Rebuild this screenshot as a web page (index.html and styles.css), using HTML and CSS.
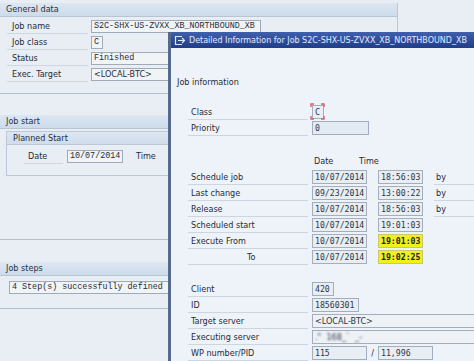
FILE: index.html
```html
<!DOCTYPE html>
<html lang="en">
<head>
    <meta charset="UTF-8">
    <title>Display Job</title>
    <link rel="stylesheet" href="styles.css">
</head>
<body>
<div class="screen">
    <!-- General data -->
    <div class="group general">
        <div class="group-head">General data</div>
        <div class="group-body">
            <div class="row"><span class="label">Job name</span><span class="inp mono wide">S2C-SHX-US-ZVXX_XB_NORTHBOUND_XB</span></div>
            <div class="row"><span class="label">Job class</span><span class="inp mono tiny">C</span></div>
            <div class="row"><span class="label">Status</span><span class="inp mono mid">Finished</span></div>
            <div class="row"><span class="label">Exec. Target</span><span class="inp mid">&lt;LOCAL-BTC&gt;</span></div>
        </div>
    </div>

    <!-- Job start -->
    <div class="group jobstart">
        <div class="group-head">Job start</div>
        <div class="subgroup">
            <div class="sub-head">Planned Start</div>
            <div class="sub-body">
                <div class="row">
                    <span class="label short">Date</span>
                    <span class="inp mono date">10/07/2014</span>
                    <span class="plain">Time</span>
                </div>
            </div>
        </div>
    </div>

    <!-- Job steps -->
    <div class="group jobsteps">
        <div class="group-head">Job steps</div>
        <div class="steps-body">
            <span class="inp mono steps">4 Step(s) successfully defined</span>
        </div>
    </div>
</div>

<!-- Dialog window over the screen -->
<div class="dialog">
    <div class="dlg-title">
        <svg class="dlg-icon" width="12" height="11" viewBox="0 0 12 11">
            <path d="M8 1.5H1.5v8H8" fill="none" stroke="#dfe8ff" stroke-width="1.2"/>
            <path d="M4 5.5h6.5M8 3l2.5 2.5L8 8" fill="none" stroke="#dfe8ff" stroke-width="1.2"/>
        </svg>
        <span>Detailed Information for Job S2C-SHX-US-ZVXX_XB_NORTHBOUND_XB</span>
    </div>
    <div class="dlg-body">
        <div class="section-title">Job information</div>

        <div class="block first">
            <div class="drow">
                <span class="dlabel">Class</span>
                <span class="focus"><span class="dinp cls">C</span>
                    <svg class="corners" width="15" height="17" viewBox="0 0 15 17">
                        <path d="M1 4V1h3M11 1h3v3M14 13v3h-3M4 16H1v-3" fill="none" stroke="#e05a6a" stroke-width="1.4"/>
                    </svg>
                </span>
            </div>
            <div class="drow"><span class="dlabel">Priority</span><span class="dinp prio">0</span></div>
        </div>

        <div class="block times">
            <div class="drow head"><span class="dlabel blank"></span><span class="col-date">Date</span><span>Time</span></div>
            <div class="drow"><span class="dlabel">Schedule job</span><span class="dinp date">10/07/2014</span><span class="dinp time">18:56:03</span><span class="by">by</span></div>
            <div class="drow"><span class="dlabel">Last change</span><span class="dinp date">09/23/2014</span><span class="dinp time">13:00:22</span><span class="by">by</span></div>
            <div class="drow"><span class="dlabel">Release</span><span class="dinp date">10/07/2014</span><span class="dinp time">18:56:03</span><span class="by">by</span></div>
            <div class="drow"><span class="dlabel">Scheduled start</span><span class="dinp date">10/07/2014</span><span class="dinp time">19:01:03</span></div>
            <div class="drow"><span class="dlabel">Execute From</span><span class="dinp date">10/07/2014</span><span class="dinp time hl">19:01:03</span></div>
            <div class="drow"><span class="dlabel to">To</span><span class="dinp date">10/07/2014</span><span class="dinp time hl">19:02:25</span></div>
        </div>

        <div class="block server">
            <div class="drow"><span class="dlabel">Client</span><span class="dinp client">420</span></div>
            <div class="drow"><span class="dlabel">ID</span><span class="dinp jobid">18560301</span></div>
            <div class="drow"><span class="dlabel">Target server</span><span class="dinp full sans">&lt;LOCAL-BTC&gt;</span></div>
            <div class="drow"><span class="dlabel">Executing server</span><span class="dinp full"><span class="blur">.&quot; &nbsp;168_` &nbsp;_-</span></span></div>
            <div class="drow"><span class="dlabel">WP number/PID</span><span class="dinp date">115</span><span class="slash">/</span><span class="dinp date">11,996</span></div>
        </div>
    </div>
</div>
</body>
</html>
```

FILE: styles.css
```css
body {
    margin: 0;
    width: 474px;
    height: 361px;
    overflow: hidden;
    position: relative;
    background: #e9eef4;
    font-family: "DejaVu Sans Condensed", "DejaVu Sans", sans-serif;
    font-size: 9px;
    color: #1f2b38;
}

.mono {
    font-family: "Liberation Mono", monospace;
    font-size: 8.4px;
}

/* ---- background screen ---- */
.screen {
    padding-top: 3px;
}

.group {
    width: 397px;
    border-right: 1px solid #bcc8d5;
    border-bottom: 1px solid #b3c0ce;
}

.group-head {
    height: 13px;
    line-height: 13px;
    padding-left: 6px;
    background: linear-gradient(#dce7f2, #cddbea);
    border-bottom: 1px solid #b6c4d4;
    color: #26313d;
}

.group-body {
    padding: 1px 0 11px 7px;
}

.row {
    display: flex;
    align-items: center;
    height: 16px;
}

.label {
    width: 76px;
    padding-left: 5px;
    height: 14px;
    line-height: 14px;
    border-bottom: 1px solid #cfd8e2;
    margin-right: 3px;
}

.inp {
    height: 11px;
    line-height: 11px;
    padding: 0 2px;
    background: #f1f4f7;
    border: 1px solid #9fabb9;
    white-space: nowrap;
    overflow: hidden;
}

.wide { width: 164px; }
.tiny { width: 6px; }
.mid { width: 75px; }

.jobstart {
    margin-top: 21px;
    padding-bottom: 63px;
}

.subgroup {
    margin: 2px 4px 0 6px;
    border: 1px solid #bcc8d5;
}

.sub-head {
    height: 12px;
    line-height: 12px;
    padding-left: 6px;
    background: linear-gradient(#dce7f2, #cfdcea);
    border-bottom: 1px solid #bcc8d5;
}

.sub-body {
    padding: 3px 0 11px 17px;
}

.label.short {
    width: 35px;
    padding-left: 4px;
    margin-right: 4px;
}

.date {
    width: 50px;
}

.plain {
    margin-left: 13px;
}

.jobsteps {
    margin-top: 22px;
    padding-bottom: 12px;
}

.steps-body {
    padding: 5px 0 0 9px;
}

.steps {
    display: inline-block;
    width: 180px;
}

/* ---- dialog ---- */
.dialog {
    position: absolute;
    left: 168px;
    top: 32px;
    right: 0;
    bottom: 0;
    border-left: 3px solid #56698a;
    background: #eef3f9;
}

.dlg-title {
    height: 16px;
    display: flex;
    align-items: center;
    gap: 3px;
    padding-left: 3px;
    background: linear-gradient(#3f60ad, #1f3d88);
    color: #e3ebff;
    font-size: 8.9px;
    white-space: nowrap;
    overflow: hidden;
}

.dlg-icon {
    flex: none;
}

.dlg-body {
    padding: 26px 0 0 6px;
}

.section-title {
    height: 16px;
    line-height: 16px;
}

.block.first { margin-top: 14px; }
.block.times { margin-top: 17px; }
.block.server { margin-top: 16px; }

.drow {
    display: flex;
    align-items: center;
    height: 16px;
}

.dlabel {
    flex: none;
    width: 117px;
    margin-left: 11px;
    padding-left: 3px;
    height: 14px;
    line-height: 14px;
    border-bottom: 1px solid #ccd6e1;
    margin-right: 4px;
}

.dlabel.blank {
    border-bottom: none;
}

.dlabel.to {
    width: 61px;
    padding-left: 59px;
}

.dinp {
    flex: none;
    height: 12px;
    line-height: 12px;
    padding: 0 2px;
    background: #e9eef4;
    border: 1px solid #a2aebc;
    font-family: "DejaVu Sans Mono", monospace;
    font-size: 8.2px;
    color: #2a3644;
    white-space: nowrap;
    overflow: hidden;
}

.dinp.date { width: 49px; }
.dinp.time { width: 39px; margin-left: 11px; }
.dinp.prio { width: 51px; background: #e2eaf3; }
.dinp.client { width: 16px; }
.dinp.jobid { width: 41px; }

.dinp.full {
    flex: 1;
    border-right: none;
    background: #eef2f7;
}

.dinp.sans {
    font-family: "DejaVu Sans Condensed", "DejaVu Sans", sans-serif;
    font-size: 9px;
}

.dinp.hl {
    background: #f2f01c;
    border-color: #c9c86a;
    font-weight: bold;
    color: #1d2530;
}

.by {
    flex: 1;
    margin-left: 11px;
    padding-left: 2px;
    height: 14px;
    line-height: 14px;
    border-bottom: 1px solid #ccd6e1;
}

.head .col-date {
    width: 45px;
    padding-left: 2px;
}

.slash {
    width: 11px;
    text-align: center;
}

.focus {
    position: relative;
    display: inline-block;
}

.dinp.cls {
    width: 6px;
    display: block;
}

.corners {
    position: absolute;
    left: -2px;
    top: -2px;
}

.blur {
    filter: blur(0.8px);
    font-family: "DejaVu Sans Condensed", sans-serif;
    font-size: 9px;
}
```
